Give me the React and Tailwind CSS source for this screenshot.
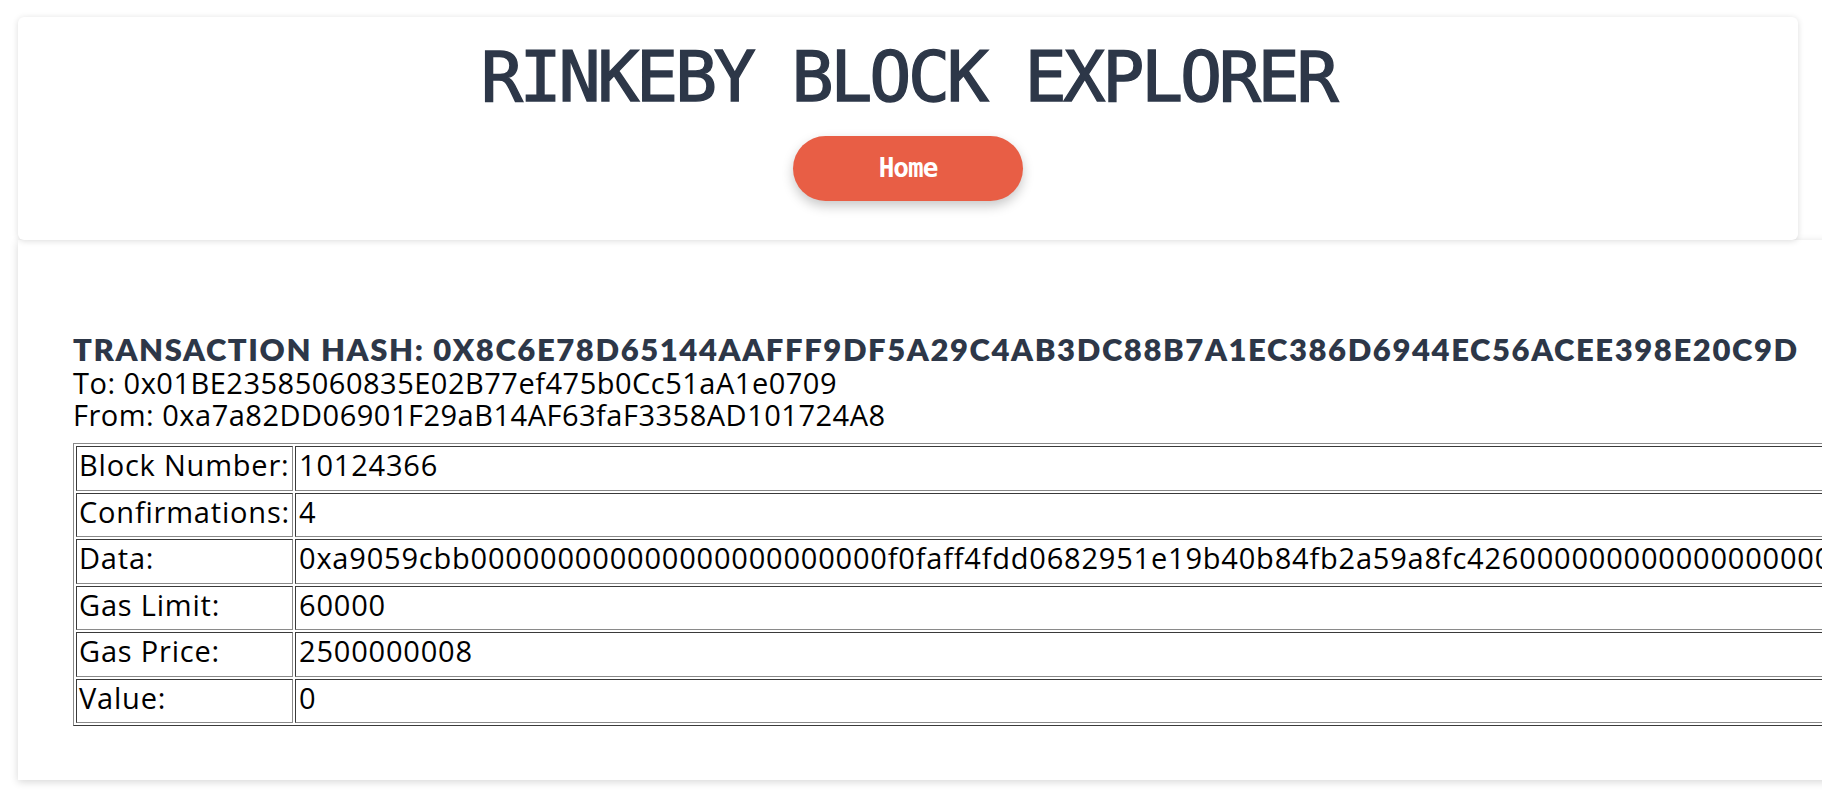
import React from "react";

const tx = {
  hash: "0x8c6e78d65144aafff9df5a29c4ab3dc88b7a1ec386d6944ec56acee398e20c9d",
  to: "0x01BE23585060835E02B77ef475b0Cc51aA1e0709",
  from: "0xa7a82DD06901F29aB14AF63faF3358AD101724A8",
  blockNumber: 10124366,
  confirmations: 4,
  data:
    "0xa9059cbb000000000000000000000000f0faff4fdd0682951e19b40b84fb2a59a8fc42600000000000000000000000000000000000000000000000000de0b6b3a7640000",
  gasLimit: 60000,
  gasPrice: 2500000008,
  value: 0,
};

const rows = [
  ["Block Number:", tx.blockNumber],
  ["Confirmations:", tx.confirmations],
  ["Data:", tx.data],
  ["Gas Limit:", tx.gasLimit],
  ["Gas Price:", tx.gasPrice],
  ["Value:", tx.value],
];

function Header() {
  return (
    <header className="relative z-10 flex h-[223px] w-[1780px] flex-col items-center rounded-[6px] bg-white pt-[25px] shadow-[0_1px_6px_rgba(0,0,0,0.14)]">
      <h1 className="font-['DejaVu_Sans_Mono',monospace] text-[70px] font-normal leading-[70px] tracking-[-3.3px] text-[#2d3748] [-webkit-text-stroke:1.4px_#2d3748]">
        RINKEBY BLOCK EXPLORER
      </h1>
      <button className="mt-[24px] flex h-[65px] w-[230px] items-center justify-center rounded-full bg-[#e85e45] font-['DejaVu_Sans_Mono',monospace] text-[26px] font-bold tracking-[-1px] text-white shadow-[0_5px_12px_rgba(0,0,0,0.22)]">
        Home
      </button>
    </header>
  );
}

function TxTable() {
  return (
    <table className="mt-[12px] border-separate border-spacing-[2px] border border-t-[#8a8a8a] border-l-[#8a8a8a] border-b-[#3a3a3a] border-r-[#3a3a3a]">
      <tbody>
        {rows.map(([label, val]) => (
          <tr key={label}>
            <td className="w-[217px] whitespace-nowrap border border-t-[#3a3a3a] border-l-[#3a3a3a] border-b-[#8a8a8a] border-r-[#8a8a8a] px-[2px] pt-0 pb-[6.5px] leading-[36px]">
              {label}
            </td>
            <td className="whitespace-nowrap border border-t-[#3a3a3a] border-l-[#3a3a3a] border-b-[#8a8a8a] border-r-[#8a8a8a] px-[3px] pt-0 pb-[6.5px] leading-[36px]">
              {val}
            </td>
          </tr>
        ))}
      </tbody>
    </table>
  );
}

export default function App() {
  return (
    <div className="min-h-screen w-screen overflow-hidden bg-white font-['Open_Sans',sans-serif] text-black">
      <div className="pl-[18px] pt-[17px]">
        <Header />
        {/* Transaction details */}
        <main className="w-max bg-white pb-[54px] pl-[55px] pr-[55px] pt-[91px] shadow-[0_2px_8px_rgba(0,0,0,0.16)]">
          <h2 className="font-['Lato',sans-serif] text-[31px] font-extrabold uppercase leading-[36px] tracking-[1.6px] text-[#2d3748]">
            Transaction Hash: {tx.hash}
          </h2>
          <div className="text-[29px] leading-[32px] tracking-[0.5px]">To: {tx.to}</div>
          <div className="text-[29px] leading-[32px] tracking-[0.5px]">From: {tx.from}</div>
          <div className="text-[29px] tracking-[0.8px]">
            <TxTable />
          </div>
        </main>
      </div>
    </div>
  );
}
